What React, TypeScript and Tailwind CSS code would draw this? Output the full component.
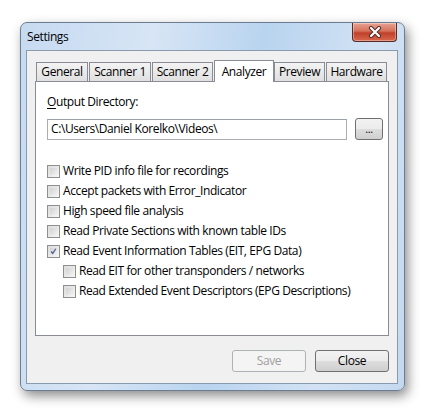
import React from "react";

const font = { fontFamily: '"Open Sans", "Noto Sans", "Liberation Sans", sans-serif' };

function Check({ checked }: { checked?: boolean }) {
  return (
    <div className="w-[13px] h-[13px] border border-[#8f8f8f] bg-[linear-gradient(135deg,#dcdcdc,#f6f6f6)] p-[2px] flex items-center justify-center shrink-0">
      <div className="w-full h-full bg-[linear-gradient(135deg,#d2d2d2,#f0f0f0)] flex items-center justify-center">
        {checked && (
          <svg width="9" height="9" viewBox="0 0 9 9">
            <path d="M1.5 4.5 L3.5 7 L7.5 1" fill="none" stroke="#4a5f97" strokeWidth="1.6" />
          </svg>
        )}
      </div>
    </div>
  );
}

function Row({ label, checked, indent }: { label: string; checked?: boolean; indent?: boolean }) {
  return (
    <div className={`flex items-center h-[20px] gap-[3px] ${indent ? "pl-[16px]" : ""}`}>
      <Check checked={checked} />
      <span className="text-[12px] text-black leading-none">{label}</span>
    </div>
  );
}

const tabs = ["General", "Scanner 1", "Scanner 2", "Analyzer", "Preview", "Hardware"];
const tabW = [52, 62, 61, 60, 51, 61];

export default function App() {
  return (
    <div className="w-[427px] h-[414px] bg-white pl-[20px] pt-[22px] tracking-[-0.4px]" style={font}>
      <div className="w-[385px] h-[369px] rounded-[7px] border border-[#6b7d93] bg-[linear-gradient(100deg,#c6daf1_0%,#d7e5f5_30%,#b9d4ef_55%,#d2e2f4_80%,#c4d8ef_100%)] shadow-[3px_5px_12px_rgba(0,0,0,0.45)] flex flex-col">
        <div className="h-[27px] flex items-start">
          <span className="pl-[6px] pt-[5px] text-[12px] text-black">Settings</span>
          <div className="ml-auto mr-[7px] w-[45px] h-[19px] rounded-b-[4px] border border-t-0 border-[#5a2a24] bg-[linear-gradient(#e8a493_0%,#d5705a_45%,#c0402a_55%,#d8684d_100%)] flex items-center justify-center shadow-[inset_0_0_0_1px_rgba(255,255,255,0.35)]">
            <svg width="14" height="12" viewBox="0 0 14 12">
              <path d="M3 2 L11 10 M11 2 L3 10" stroke="#4a2a25" strokeWidth="4" strokeLinecap="round" />
              <path d="M3 2 L11 10 M11 2 L3 10" stroke="#ffffff" strokeWidth="2.2" strokeLinecap="round" />
            </svg>
          </div>
        </div>
        <div className="ml-[5px] mr-[6px] mb-[6px] flex-1 border border-[#8a9bb0] bg-[#f0f0f0] flex flex-col pl-[8px] pr-[8px]">
          <div className="flex items-end h-[30px] pl-[1px] pt-[8px]">
            {tabs.map((t, i) => {
              const sel = t === "Analyzer";
              return (
                <div
                  key={t}
                  style={{ width: tabW[i] }}
                  className={
                    sel
                      ? "h-[22px] -mb-px relative z-10 bg-white border border-b-0 border-[#898c95] flex items-start justify-center pt-[2px] text-[12px] text-black"
                      : "h-[19px] mt-[3px] mr-[1px] bg-[linear-gradient(#f3f3f3,#e0e0e0)] border border-b-0 border-[#898c95] flex items-center justify-center text-[12px] text-black"
                  }
                >
                  {t}
                </div>
              );
            })}
          </div>
          <div className="h-[255px] bg-white border border-[#898c95] pl-[11px] pt-[14px] flex flex-col">
            <div className="text-[12px] text-black leading-none h-[15px]">
              <span className="underline underline-offset-2">O</span>utput Directory:
            </div>
            <div className="flex items-center mt-[7px] h-[22px]">
              <div className="w-[300px] h-[21px] border border-[#abadb3] border-t-[#9ca0a8] bg-white flex items-center pl-[3px] text-[12px] text-black">
                C:\Users\Daniel Korelko\Videos\
              </div>
              <div className="ml-[8px] w-[28px] h-[22px] rounded-[3px] border border-[#707070] bg-[linear-gradient(#f2f2f2_0%,#ebebeb_50%,#dddddd_51%,#cfcfcf_100%)] flex items-center justify-center text-[11px] text-black leading-none pb-[2px]">
                ...
              </div>
            </div>
            <div className="mt-[21px] flex flex-col">
              <Row label="Write PID info file for recordings" />
              <Row label="Accept packets with Error_Indicator" />
              <Row label="High speed file analysis" />
              <Row label="Read Private Sections with known table IDs" />
              <Row label="Read Event Information Tables (EIT, EPG Data)" checked />
              <Row label="Read EIT for other transponders / networks" indent />
              <Row label="Read Extended Event Descriptors (EPG Descriptions)" indent />
            </div>
          </div>
          <div className="flex justify-end gap-[9px] mt-[14px] pr-[0px]">
            <div className="w-[74px] h-[22px] rounded-[3px] border border-[#adb2b5] bg-[#f4f4f4] flex items-center justify-center text-[12px] text-[#a0a0a0]">
              Save
            </div>
            <div className="w-[74px] h-[22px] rounded-[3px] border border-[#707070] bg-[linear-gradient(#f2f2f2_0%,#ebebeb_50%,#dddddd_51%,#cfcfcf_100%)] flex items-center justify-center text-[12px] text-black">
              Close
            </div>
          </div>
        </div>
      </div>
    </div>
  );
}
